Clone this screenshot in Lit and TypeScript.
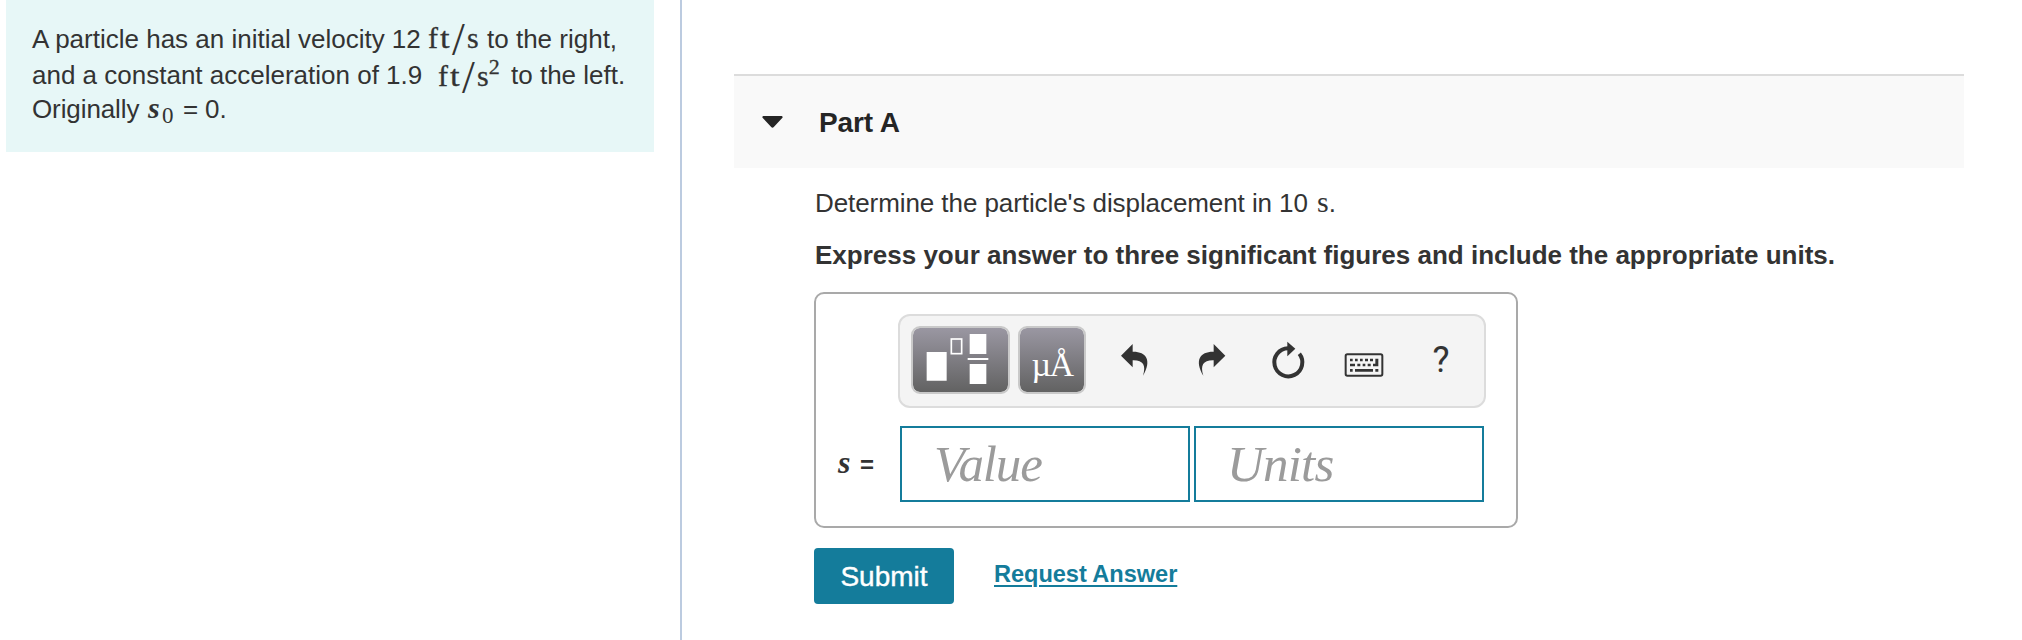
import { LitElement, html, css } from "lit";

class ProblemStatement extends LitElement {
  static styles = css`
    :host { display: block; box-sizing: border-box; width: 648px; height: 152px; margin-left: 6px; padding: 21px 0 0 26px; background: #e7f7f7; }
    .line { height: 36px; line-height: 36px; white-space: pre; font-size: 26px; }
    .line.last { height: 32px; line-height: 32px; }
    .line > span { display: inline-block; }
    .math { font: 30px/0 "Liberation Serif", serif; -webkit-text-stroke: 0.3px #333; }
    .math i, .math b { display: inline-block; font-style: normal; font-weight: 400; line-height: 0; }
    .f { width: 12px; }
    .t { width: 12px; transform-origin: 0 50%; transform: scaleX(1.15); }
    .slash { width: 15px; font-size: 46px; vertical-align: -7px; -webkit-text-stroke: 0; }
    .sup { font-size: 22px; vertical-align: 12px; width: 14px; }
    .down { vertical-align: -2px; }
    .a { width: 396px; }
    .b { width: 59px; }
    .c { width: 406px; }
    .d { width: 73px; }
    .e { width: 116px; letter-spacing: -0.1px; }
    .s0 { width: 35px; }
    .s0 .var { font: italic bold 30px/0 "Liberation Serif", serif; width: 14px; -webkit-text-stroke: 0; }
    .s0 .sub { font-size: 23px; vertical-align: -5px; -webkit-text-stroke: 0; }
    .eq { width: 22px; }
  `;
  render() {
    return html`
      <div class="line"><span class="a">A particle has an initial velocity 12</span><span class="math b"><i class="f">f</i><i class="t">t</i><i class="slash">/</i><i>s</i></span><span>to the right,</span></div>
      <div class="line"><span class="c">and a constant acceleration of 1.9</span><span class="math down d"><i class="f">f</i><i class="t">t</i><i class="slash">/</i><i>s</i><i class="sup">2</i></span><span>to the left.</span></div>
      <div class="line last"><span class="e">Originally</span><span class="math s0"><i class="var">s</i><i class="sub">0</i></span><span class="eq">=</span><span>0.</span></div>
    `;
  }
}
customElements.define("problem-statement", ProblemStatement);

class MathToolbar extends LitElement {
  static styles = css`
    :host { display: flex; align-items: flex-start; box-sizing: border-box; width: 588px; height: 94px; padding: 10px 9px 10px 11px; border: 2px solid #dcdcdc; border-radius: 12px; background: #f4f4f4; }
    button { box-sizing: border-box; height: 68px; padding: 0; margin: 0; color: #333; background: none; border: 0; flex: none; }
    svg { display: block; }
    .key { border: 2px solid #c9c9c9; border-radius: 9px; background: linear-gradient(#9a97a2, #626262) padding-box; }
    .templates { width: 99px; margin-right: 8px; }
    .symbols { width: 68px; margin-right: 10px; color: #fff; font: 34px/64px "Liberation Serif", serif; letter-spacing: -1.5px; padding: 5px 0 0 0; }
    .icon { width: 76px; }
    .help { font: 36px/68px Roboto, sans-serif; padding-left: 6px; }
  `;
  render() {
    return html`
      <button class="key templates" aria-label="Templates">
        <svg width="96" height="64" viewBox="337 144 288 192" fill="#fff">
          <path d="M378 216h60v86h-60zM507 162h50v60h-50zM501 234h62v6h-62zM507 252h50v60h-50z"/>
          <rect x="452" y="177" width="31" height="44" fill="none" stroke="#fff" stroke-width="5"/>
        </svg>
      </button>
      <button class="key symbols">µÅ</button>
      <button class="icon" aria-label="Undo">
        <svg width="76" height="68" viewBox="-42 -12 228 204" fill="#333"><path d="M33 77L68 42V65C108 64 127 90 99 137C109 105 99 90 68 91V112Z"/></svg>
      </button>
      <button class="icon" aria-label="Redo">
        <svg width="76" height="68" viewBox="185 -12 228 204" fill="#333"><path d="M345 77L310 42V65C270 64 251 90 279 137C269 105 279 90 310 91V112Z"/></svg>
      </button>
      <button class="icon" aria-label="Reset">
        <svg width="76" height="68" viewBox="414 -12 228 204" fill="#333"><path d="M534 55A42 42 0 1 0 568 71" fill="none" stroke="#333" stroke-width="12"/><path d="M532 35L556 56L532 79Z"/></svg>
      </button>
      <button class="icon" aria-label="Keyboard">
        <svg width="76" height="68" viewBox="72 -12 228 204" fill="#333"><rect x="137" y="73" width="110" height="64" rx="5" fill="none" stroke="#333" stroke-width="6"/>
        <path d="M150 86h8v8h-8zM165 86h8v8h-8zM180 86h8v8h-8zM195 86h9v8h-9zM210 86h9v8h-9zM226 86h9v23h-16v-8h7zM150 101h15v8h-15zM172 101h9v8h-9zM188 101h8v8h-8zM203 101h9v8h-9zM150 117h8v8h-8zM165 117h54v8h-54zM226 117h9v8h-9z"/></svg>
      </button>
      <button class="icon help">?</button>
    `;
  }
}
customElements.define("math-toolbar", MathToolbar);

class AppRoot extends LitElement {
  static styles = css`
    :host { display: flex; height: 640px; overflow: hidden; background: #fff; color: #333; font-family: "Liberation Sans", Arial, sans-serif; }
    .left { box-sizing: border-box; width: 682px; border-right: 2px solid #bccbe0; flex: none; }
    .right { width: 1230px; margin-left: 52px; padding-top: 74px; }
    .head { display: flex; align-items: center; box-sizing: border-box; height: 94px; padding-left: 28px; border-top: 2px solid #dcdcdc; background: #f9f9f9; color: #252525; }
    .head svg { margin-right: 36px; }
    h2 { margin: 1px 0 0; font-size: 28px; line-height: 40px; letter-spacing: -0.1px; }
    .body { padding-left: 80px; }
    p { margin: 0; padding-left: 1px; white-space: pre; }
    .question { height: 52px; padding-top: 17px; box-sizing: border-box; font-size: 26px; line-height: 36px; letter-spacing: -0.08px; }
    .unit { font: 30px/0 "Liberation Serif", serif; margin: 0 0 0 2px; }
    .instruction { height: 72px; padding-top: 17px; box-sizing: border-box; font-size: 26px; font-weight: 700; line-height: 36px; }
    .answer { box-sizing: border-box; width: 704px; height: 236px; border: 2px solid #a9a9a9; border-radius: 10px; padding: 20px 0 0 82px; }
    .row { display: flex; margin: 18px 0 0 -60px; align-items: center; }
    .label { width: 62px; box-sizing: border-box; padding-top: 2px; white-space: pre; font-size: 24px; font-weight: 700; line-height: 36px; }
    .label i { display: inline-block; width: 22px; font: italic bold 32px/0 "Liberation Serif", serif; }
    .field { box-sizing: border-box; width: 290px; height: 76px; margin-right: 4px; padding: 0 0 0 32px; border: 2px solid #147c9b; color: #9b9b9b; font: italic 51px/72px "Liberation Serif", serif; }
    .value { letter-spacing: -1.1px; }
    .units { letter-spacing: -0.8px; padding-left: 31px; }
    .actions { display: flex; margin-top: 20px; }
    .submit { width: 140px; height: 56px; padding: 1px 0 0; border: 0; border-radius: 4px; background: #147c9b; color: #fff; font: 28px/55px "Liberation Sans", sans-serif; -webkit-text-stroke: 0.4px #fff; }
    .request { margin: 9px 0 0 40px; color: #147c9b; font-size: 23.6px; font-weight: 700; line-height: 34px; text-decoration: underline; text-decoration-thickness: 2px; text-underline-offset: 3px; letter-spacing: -0.05px; }
  `;
  render() {
    return html`
      <div class="left"><problem-statement></problem-statement></div>
      <div class="right">
        <div class="head">
          <svg width="21" height="12" viewBox="0 0 21 12"><path d="M1.3 0H19.7Q21.4.6 20.2 2L11.8 11Q10.500 12.600 9.200 11L.8 2Q-.4.600 1.300 0Z" fill="#252525"/></svg>
          <h2>Part A</h2>
        </div>
        <div class="body">
          <p class="question">Determine the particle's displacement in 10 <span class="unit">s</span>.</p>
          <p class="instruction">Express your answer to three significant figures and include the appropriate units.</p>
          <div class="answer">
            <math-toolbar></math-toolbar>
            <div class="row">
              <div class="label"><i>s</i>=</div>
              <div class="field value">Value</div>
              <div class="field units">Units</div>
            </div>
          </div>
          <div class="actions">
            <button class="submit">Submit</button>
            <a class="request">Request Answer</a>
          </div>
        </div>
      </div>
    `;
  }
}
customElements.define("app-root", AppRoot);
